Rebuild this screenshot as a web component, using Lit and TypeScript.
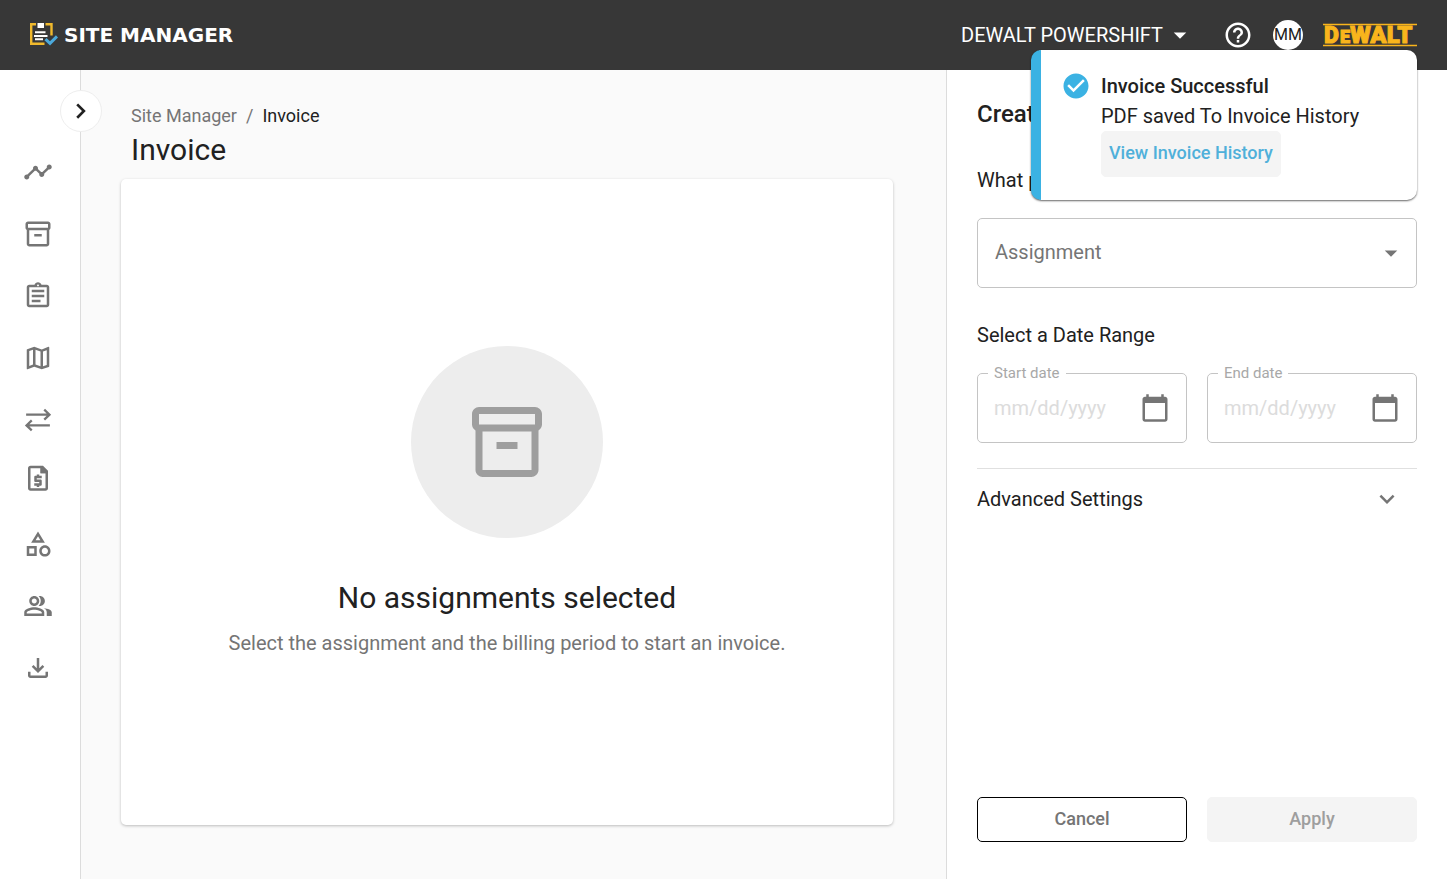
import { LitElement, html, css, svg } from "lit";
import { customElement, property } from "lit/decorators.js";

const ICONS = {
  timeline: svg`<path d="M23 8c0 1.1-.9 2-2 2-.18 0-.35-.02-.51-.07l-3.56 3.55c.05.16.07.34.07.52 0 1.1-.9 2-2 2s-2-.9-2-2c0-.18.02-.36.07-.52l-2.55-2.55c-.16.05-.34.07-.52.07s-.36-.02-.52-.07l-4.55 4.56c.05.16.07.33.07.51 0 1.1-.9 2-2 2s-2-.9-2-2 .9-2 2-2c.18 0 .35.02.51.07l4.56-4.55C8.02 9.36 8 9.18 8 9c0-1.1.9-2 2-2s2 .9 2 2c0 .18-.02.36-.07.52l2.55 2.55c.16-.05.34-.07.52-.07s.36.02.52.07l3.55-3.56C19.02 8.35 19 8.18 19 8c0-1.1.9-2 2-2s2 .9 2 2z"/>`,
  archive: svg`<path d="M20 2H4c-1 0-2 .9-2 2v3.01c0 .72.43 1.34 1 1.69V20c0 1.1 1.1 2 2 2h14c.9 0 2-.9 2-2V8.7c.57-.35 1-.97 1-1.69V4c0-1.1-1-2-2-2zm-1 18H5V9h14v11zm1-13H4V4h16v3z"/><path d="M9 12h6v2H9z"/>`,
  clipboard: svg`<path d="M7 15h7v2H7zm0-4h10v2H7zm0-4h10v2H7zm12-4h-4.18C14.4 1.84 13.3 1 12 1s-2.4.84-2.82 2H5c-1.1 0-2 .9-2 2v14c0 1.1.9 2 2 2h14c1.1 0 2-.9 2-2V5c0-1.1-.9-2-2-2zm-7-.25c.41 0 .75.34.75.75s-.34.75-.75.75-.75-.34-.75-.75.34-.75.75-.75zM19 19H5V5h14v14z"/>`,
  map: svg`<path d="M20.5 3l-.16.03L15 5.1 9 3 3.36 4.9c-.21.07-.36.25-.36.48V20.500c0 .28.22.5.5.5l.16-.03L9 18.900l6 2.100 5.640-1.900c.21-.07.36-.25.36-.48V3.500c0-.28-.22-.5-.5-.5zM10 5.470l4 1.400v11.660l-4-1.400V5.470zm-5 .99l3-1.010v11.700l-3 1.160V6.460zm14 11.080l-3 1.010V6.860l3-1.160v11.840z"/>`,
  transfer: svg`<path d="M2.500 7.700H21M17 3.700l4.200 4-4.200 4M21.500 16.300H3M7 12.300l-4.200 4 4.200 4" fill="none" stroke="currentColor" stroke-width="1.800"/>`,
  quote: svg`<path d="M16 2H6c-1.100 0-2 .9-2 2v16c0 1.100.9 2 2 2h12c1.100 0 2-.9 2-2V6l-4-4zM6 20V4h8v4h4v12H6z"/><path d="M14 2v6h6z"/><path d="M11 19h2v-1h1c.55 0 1-.45 1-1v-3c0-.55-.45-1-1-1h-3v-1h4v-2h-2V9h-2v1h-1c-.55 0-1 .45-1 1v3c0 .55.45 1 1 1h3v1H9v2h2v1z"/>`,
  category: svg`<path d="M12 2l-5.500 9h11L12 2zm0 3.840L13.930 9h-3.870L12 5.840zM17.500 13c-2.490 0-4.500 2.010-4.500 4.500s2.010 4.500 4.500 4.500 4.500-2.010 4.500-4.500-2.010-4.500-4.500-4.500zm0 7c-1.380 0-2.500-1.120-2.500-2.500s1.120-2.500 2.500-2.500 2.500 1.120 2.500 2.500-1.120 2.500-2.500 2.500zM3 21.500h8v-8H3v8zm2-6h4v4H5v-4z"/>`,
  people: svg`<path d="M9 12c2.210 0 4-1.790 4-4s-1.790-4-4-4-4 1.790-4 4 1.790 4 4 4zm0-6c1.100 0 2 .9 2 2s-.9 2-2 2-2-.9-2-2 .9-2 2-2zM9 13c-2.670 0-8 1.340-8 4v3h16v-3c0-2.660-5.330-4-8-4zm6 5H3v-.99C3.200 16.290 6.300 15 9 15s5.800 1.290 6 2v1zM16.530 13.830C18.420 14.630 19 15.890 19 17v3h4v-3c0-1.820-2.990-2.900-6.470-3.170z"/><path d="M12.500 4.050C13 4 13 4 13.500 4c2.200 0 4 1.800 4 4s-1.800 4-4 4l-1-.05C13.500 10.800 14.200 9.500 14.200 8s-.7-2.900-1.700-3.950z"/>`,
  download: svg`<path d="M18 15v3H6v-3H4v3c0 1.100.9 2 2 2h12c1.100 0 2-.9 2-2v-3h-2zM17 11l-1.410-1.410L13 12.170V4h-2v8.170L8.410 9.590 7 11l5 5 5-5z"/>`,
  help: svg`<path d="M11 18h2v-2h-2v2zm1-16C6.480 2 2 6.480 2 12s4.480 10 10 10 10-4.480 10-10S17.520 2 12 2zm0 18c-4.410 0-8-3.590-8-8s3.590-8 8-8 8 3.590 8 8-3.590 8-8 8zm0-14c-2.210 0-4 1.790-4 4h2c0-1.100.9-2 2-2s2 .9 2 2c0 2-3 1.750-3 5h2c0-2.250 3-2.500 3-5 0-2.210-1.790-4-4-4z"/>`,
  caret: svg`<path d="M7 10l5 5 5-5z"/>`,
  right: svg`<path d="M8.200 7.400 12.800 12l-4.600 4.600 1.500 1.500L15.800 12 9.700 5.900z"/>`,
  down: svg`<path d="M16.590 8.590L12 13.170 7.410 8.590 6 10l6 6 6-6z"/>`,
  calendar: svg`<path d="M20 3h-1V1h-2v2H7V1H5v2H4c-1.100 0-2 .9-2 2v16c0 1.100.9 2 2 2h16c1.100 0 2-.9 2-2V5c0-1.100-.9-2-2-2zm0 18H4V8h16v13z"/>`,
  check: svg`<path d="M12 2C6.480 2 2 6.480 2 12s4.480 10 10 10 10-4.480 10-10S17.520 2 12 2zm-2 15l-5-5 1.410-1.410L10 14.170l7.590-7.590L19 8l-9 9z"/>`,
};

type IconName = keyof typeof ICONS;

@customElement("app-icon")
class AppIcon extends LitElement {
  static styles = css`
    :host { display: block; width: 30px; height: 30px; }
    svg { display: block; width: 100%; height: 100%; fill: currentColor; overflow: visible; }
  `;
  @property() name: IconName = "archive";
  render() {
    // The quote sheet sits a little above the centre of its row.
    const box = this.name === "quote" ? "0 3 24 24" : "0 0 24 24";
    return html`<svg viewBox=${box} aria-hidden="true">${ICONS[this.name]}</svg>`;
  }
}

const NAV: { icon: IconName; label: string }[] = [
  { icon: "timeline", label: "Dashboard" },
  { icon: "archive", label: "Inventory" },
  { icon: "clipboard", label: "Assignments" },
  { icon: "map", label: "Map" },
  { icon: "transfer", label: "Transfers" },
  { icon: "quote", label: "Invoice" },
  { icon: "category", label: "Catalog" },
  { icon: "people", label: "People" },
  { icon: "download", label: "Downloads" },
];

@customElement("app-root")
class AppRoot extends LitElement {
  static styles = css`
    :host {
      display: flex;
      flex-direction: column;
      position: relative;
      min-height: 100vh;
      font-family: Roboto, "Liberation Sans", sans-serif;
      font-size: 20px;
      line-height: 30px;
      color: #212121;
      background: #fff;
    }
    *, *::before { box-sizing: border-box; }
    button, select, input { font: inherit; color: inherit; margin: 0; }
    button { cursor: pointer; padding: 0; border: 0; background: none; }
    h1, h2, h3, p { margin: 0; font-weight: 400; }
    a { color: inherit; text-decoration: none; }

    .topbar {
      display: flex;
      align-items: center;
      justify-content: space-between;
      height: 70px;
      padding: 0 30px;
      background: #373737;
      color: #fff;
    }
    .brand { display: flex; align-items: center; gap: 6px; }
    .brand-mark { display: block; width: 28px; height: 24px; }
    .brand-name { font: 700 20px/24px "DejaVu Sans", sans-serif; }
    .account { display: flex; align-items: center; gap: 20px; }
    .picker { display: grid; align-items: center; }
    .picker > * { grid-area: 1 / 1; }
    .picker app-icon { justify-self: end; pointer-events: none; }
    .picker select {
      appearance: none;
      border: 0;
      background: transparent;
      outline: none;
    }
    .org { margin-right: 8px; }
    .org select { padding: 0 31px 0 0; }
    .org option { color: #212121; }
    .avatar {
      width: 30px;
      height: 30px;
      border-radius: 50%;
      background: #fff;
      color: #212121;
      font-size: 16px;
      line-height: 30px;
      text-align: center;
    }
    .dewalt { display: block; width: 94px; height: 24px; overflow: visible; }
    .dewalt text { font-family: Roboto, sans-serif; font-weight: 900; }

    .body { display: flex; flex: 1; }
    .sidebar {
      position: relative;
      flex: none;
      width: 81px;
      padding: 87px 5px 0 0;
      border-right: 1px solid #dcdcdc;
    }
    .nav {
      display: flex;
      flex-direction: column;
      align-items: center;
      gap: 32px;
      color: #757575;
    }
    .nav a { display: block; }
    .expand {
      position: absolute;
      top: 20px;
      right: -22px;
      display: grid;
      place-items: center;
      width: 42px;
      height: 42px;
      border: 1px solid #eee;
      border-radius: 50%;
      background: #fff;
      color: #212121;
    }

    .main {
      display: flex;
      flex: 1;
      flex-direction: column;
      padding: 31px 53px 54px 40px;
      background: #fafafa;
    }
    .crumbs {
      display: flex;
      gap: 9px;
      padding-left: 10px;
      font-size: 18px;
      color: #757575;
    }
    .crumbs .here { color: #212121; }
    .title { padding-left: 10px; font-size: 30px; line-height: 38px; }
    .card {
      display: flex;
      flex: 1;
      flex-direction: column;
      align-items: center;
      justify-content: center;
      margin-top: 10px;
      border-radius: 5px;
      background: #fff;
      box-shadow: 0 1px 3px rgba(0, 0, 0, 0.25);
    }
    .disc {
      display: grid;
      place-items: center;
      width: 192px;
      height: 192px;
      border-radius: 50%;
      background: #ededed;
      color: #9e9e9e;
    }
    .disc app-icon { width: 84px; height: 84px; }
    .empty-title { margin-top: 40px; font-size: 30px; line-height: 40px; }
    .empty-text { margin-top: 10px; color: #757575; }

    .panel {
      display: flex;
      flex: none;
      flex-direction: column;
      width: 501px;
      padding: 29px 30px 37px;
      border-left: 1px solid #dcdcdc;
    }
    .panel-title { font-size: 24px; font-weight: 500; }
    .question { display: block; margin-top: 36px; }
    .assignment { margin-top: 23px; color: #757575; }
    .assignment select {
      width: 100%;
      height: 70px;
      padding: 0 17px 2px;
      border: 1px solid #c4c4c4;
      border-radius: 5px;
    }
    .assignment app-icon { margin-right: 11px; }
    .range-title { margin-top: 32px; font-size: 20px; }
    .range { display: grid; grid-template-columns: 1fr 1fr; gap: 20px; margin-top: 13px; }
    .date {
      display: flex;
      min-width: 0;
      height: 80px;
      margin: 0;
      padding: 0 16px 0 10px;
      border: 1px solid #c4c4c4;
      border-radius: 5px;
    }
    .date legend { padding: 0 6px; font-size: 15px; line-height: 20px; color: #a8a8a8; }
    .date-row { display: flex; flex: 1; align-items: center; min-width: 0; padding-bottom: 10px; }
    .date input {
      flex: 1;
      width: 0;
      padding: 0 0 0 6px;
      border: 0;
      background: transparent;
      outline: none;
    }
    .date input::placeholder { color: #dcdcdc; opacity: 1; }
    .date button { color: #757575; }
    .advanced {
      display: flex;
      align-items: center;
      justify-content: space-between;
      margin-top: 25px;
      padding: 15px 15px 15px 0;
      border-top: 1px solid #e0e0e0;
      text-align: left;
    }
    .advanced app-icon { color: #757575; }
    .actions { display: grid; grid-template-columns: 1fr 1fr; gap: 20px; margin-top: auto; }
    .btn {
      height: 45px;
      padding: 0 7px 2px;
      border: 1px solid #f4f4f4;
      border-radius: 5px;
      background: #f4f4f4;
      font-size: 18px;
      font-weight: 500;
      color: #9e9e9e;
    }
    .btn.cancel { border-color: #000; background: #fff; color: #757575; }

    .toast {
      position: absolute;
      top: 50px;
      right: 30px;
      display: flex;
      gap: 10px;
      width: 386px;
      padding: 21px 20px 23px;
      border-left: 10px solid #3bb2e3;
      border-radius: 10px;
      background: #fff;
      box-shadow: 0 1px 2px rgba(0, 0, 0, 0.6);
    }
    .toast app-icon { color: #3bb2e3; }
    .toast-title { font-weight: 500; }
    .btn.history { height: 46px; color: #4fb0da; }
  `;

  private dateField(id: string, label: string) {
    return html`
      <fieldset class="date">
        <legend><label for=${id}>${label}</label></legend>
        <div class="date-row">
          <input id=${id} type="text" placeholder="mm/dd/yyyy" />
          <button type="button" aria-label="Choose ${label}"><app-icon name="calendar"></app-icon></button>
        </div>
      </fieldset>
    `;
  }

  render() {
    return html`
      <header class="topbar">
        <a class="brand" href="#">
          <svg class="brand-mark" viewBox="0 0 28 24" aria-hidden="true">
            <path d="M6 1.200H1.200V20.800H14.500M15.500 1.200H21.500V12.500" fill="none" stroke="#f0b92d" stroke-width="2.400" />
            <path d="M7.500 0h6.500v5H7.500zM5 8.200h10.500v2H5zM4 12h13.500v2H4zM5 15.200h8v2H5z" fill="#fff" />
            <path d="M15.500 16.200l4.500 4.200 7-7" fill="none" stroke="#373737" stroke-width="5" />
            <path d="M15.500 16.200l4.500 4.200 7-7" fill="none" stroke="#4ba9dc" stroke-width="3" />
          </svg>
          <span class="brand-name">SITE MANAGER</span>
        </a>
        <div class="account">
          <div class="picker org">
            <select aria-label="Organization"><option>DEWALT POWERSHIFT</option></select>
            <app-icon name="caret"></app-icon>
          </div>
          <button type="button" aria-label="Help"><app-icon name="help"></app-icon></button>
          <button type="button" class="avatar">MM</button>
          <svg class="dewalt" viewBox="0 0 94 24" role="img" aria-label="DeWalt">
            <path d="M0 1.500h94M0 22.500h94" stroke="#f9b51c" stroke-width="1.500" />
            <g fill="#f9b51c" stroke="#f9b51c" stroke-width="1">
              <text x="1" y="20" font-size="23">D</text>
              <text x="17" y="20" font-size="18">E</text>
              <text x="27" y="20" font-size="24">WALT</text>
            </g>
          </svg>
        </div>
      </header>

      <div class="body">
        <aside class="sidebar">
          <nav class="nav" aria-label="Main">
            ${NAV.map((n) => html`<a href="#" aria-label=${n.label}><app-icon name=${n.icon}></app-icon></a>`)}
          </nav>
          <button type="button" class="expand" aria-label="Expand menu"><app-icon name="right"></app-icon></button>
        </aside>

        <main class="main">
          <nav class="crumbs" aria-label="Breadcrumb">
            <a href="#">Site Manager</a><span>/</span><span class="here">Invoice</span>
          </nav>
          <h1 class="title">Invoice</h1>
          <section class="card">
            <div class="disc"><app-icon name="archive"></app-icon></div>
            <h2 class="empty-title">No assignments selected</h2>
            <p class="empty-text">Select the assignment and the billing period to start an invoice.</p>
          </section>
        </main>

        <aside class="panel">
          <h2 class="panel-title">Create Invoice</h2>
          <label class="question" for="assignment">What project is this for?</label>
          <div class="picker assignment">
            <select id="assignment"><option>Assignment</option></select>
            <app-icon name="caret"></app-icon>
          </div>
          <h3 class="range-title">Select a Date Range</h3>
          <div class="range">
            ${this.dateField("start", "Start date")} ${this.dateField("end", "End date")}
          </div>
          <button type="button" class="advanced" aria-expanded="false">
            Advanced Settings<app-icon name="down"></app-icon>
          </button>
          <div class="actions">
            <button type="button" class="btn cancel">Cancel</button>
            <button type="button" class="btn" disabled>Apply</button>
          </div>
        </aside>
      </div>

      <div class="toast" role="status">
        <app-icon name="check"></app-icon>
        <div>
          <p class="toast-title">Invoice Successful</p>
          <p>PDF saved To Invoice History</p>
          <button type="button" class="btn history">View Invoice History</button>
        </div>
      </div>
    `;
  }
}
